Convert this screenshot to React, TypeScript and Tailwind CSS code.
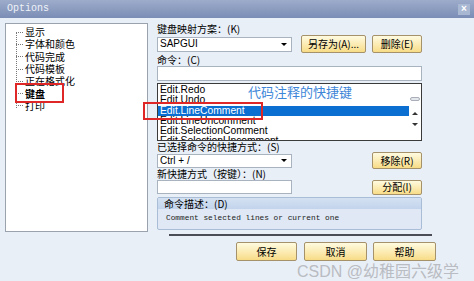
import { ReactNode } from 'react';

const cjk = { fontFamily: '"Noto Sans CJK SC", "Liberation Sans", sans-serif' };
const latin = { fontFamily: '"Liberation Sans", "Noto Sans CJK SC", sans-serif' };
const mono = { fontFamily: '"Liberation Mono", "DejaVu Sans Mono", monospace' };

function YellowButton({ children, className = '' }: { children: ReactNode; className?: string }) {
  return (
    <div
      className={`flex items-center justify-center rounded-[2px] border border-[#a6926a] bg-gradient-to-b from-[#fffbe0] to-[#f8dc86] text-[10px] text-black leading-none ${className}`}
      style={cjk}
    >
      {children}
    </div>
  );
}

function Combo({ value, className = '' }: { value: string; className?: string }) {
  return (
    <div className={`flex items-center justify-between border border-[#a9b2bf] bg-white pl-[2px] pr-[4px] ${className}`}>
      <span className="text-[10px] leading-none text-black" style={latin}>{value}</span>
      <span className="h-0 w-0 border-x-[3px] border-t-[3px] border-x-transparent border-t-black" />
    </div>
  );
}

const treeItems = ['显示', '字体和颜色', '代码完成', '代码模板', '正在格式化', '键盘', '打印'];
const commands = [
  'Edit.Redo',
  'Edit.Undo',
  'Edit.LineComment',
  'Edit.LineUncomment',
  'Edit.SelectionComment',
  'Edit.SelectionUncomment',
];

export default function App() {
  return (
    <div className="relative h-[281px] w-[474px] overflow-hidden bg-[#e9eff7]" style={cjk}>
      {/* title bar */}
      <div className="flex h-[18px] items-center justify-between bg-gradient-to-b from-[#9eaccb] to-[#7a8db5] pl-[7px] pr-[4px]">
        <span className="text-[10px] leading-none text-[#eef2f8]" style={mono}>Options</span>
        <div className="flex h-[11px] w-[12px] items-center justify-center bg-[#a8b7d2] text-[10px] leading-none font-bold text-white" style={latin}>
          ×
        </div>
      </div>

      <div className="flex pl-[5px] pt-[5px]">
        {/* tree */}
        <div className="relative h-[209px] w-[143px] border border-[#9aa3ad] bg-white pt-[2px]">
          <div className="absolute left-[10px] top-[8px] h-[76px] w-0 border-l border-dotted border-[#777]" />
          {treeItems.map((t) => (
            <div key={t} className="flex h-[12.3px] items-center">
              <span className="ml-[10px] mr-[2px] w-[7px] border-t border-dotted border-[#777]" />
              <span className={`text-[10px] leading-none text-black ${t === '键盘' ? 'font-bold' : ''}`}>{t}</span>
            </div>
          ))}
          <div className="absolute left-[9px] top-[59px] h-[20px] w-[49px] border-2 border-[#e02727]" />
        </div>

        {/* right side */}
        <div className="ml-[9px] flex w-[279px] flex-col">
          <div className="flex h-[12px] items-center text-[10px] leading-none text-black">键盘映射方案：(K)</div>
          <div className="flex h-[18px] items-center">
            <Combo value="SAPGUI" className="h-[15px] w-[135px]" />
            <YellowButton className="ml-[9px] h-[18px] w-[65px]">另存为(A)...</YellowButton>
            <YellowButton className="ml-[6px] h-[18px] w-[50px]">删除(E)</YellowButton>
          </div>
          <div className="flex h-[13px] items-center text-[10px] leading-none text-black">命令：(C)</div>
          <div className="h-[15px] w-[265px] border border-[#a9b2bf] bg-white" />

          {/* command list */}
          <div className="mt-[2px] flex h-[58px] w-[265px] overflow-hidden border border-[#3a3a3a] bg-white">
            <div className="flex-1 pt-[1px]">
              {commands.map((c) => (
                <div
                  key={c}
                  className={`flex h-[10.3px] items-center pl-[2px] text-[10.3px] leading-none ${
                    c === 'Edit.LineComment' ? 'bg-[#0b6fd2] text-white' : 'text-black'
                  }`}
                  style={latin}
                >
                  {c}
                </div>
              ))}
            </div>
            <div className="flex w-[12px] flex-col items-center pt-[13px]">
              <div className="h-[4px] w-[10px] rounded-[2px] border border-[#a9aeb8] bg-[#e4e7ec]" />
              <span className="mt-[11px] h-0 w-0 border-x-[3px] border-b-[3px] border-x-transparent border-b-[#333]" />
              <span className="mt-[8px] h-0 w-0 border-x-[3px] border-t-[3px] border-x-transparent border-t-[#333]" />
            </div>
          </div>

          <div className="flex h-[11px] items-end text-[10px] leading-none text-black">已选择命令的快捷方式：(S)</div>
          <div className="flex h-[17px] items-center">
            <Combo value="Ctrl + /" className="h-[14px] w-[135px]" />
            <YellowButton className="ml-[80px] h-[17px] w-[50px]">移除(R)</YellowButton>
          </div>
          <div className="flex h-[10px] items-center text-[10px] leading-none text-black">新快捷方式（按键）：(N)</div>
          <div className="flex h-[16px] items-center">
            <div className="h-[14px] w-[135px] border border-[#a9b2bf] bg-white" />
            <YellowButton className="ml-[80px] h-[15px] w-[50px]">分配(I)</YellowButton>
          </div>

          {/* description group */}
          <div className="mt-[2px] h-[33px] w-[265px] overflow-hidden rounded-[2px] border border-[#a9bdd6] bg-[#dfe8f4]">
            <div className="flex h-[11px] items-center bg-gradient-to-b from-[#d4e1f2] to-[#c2d4ec] pl-[6px] text-[10px] leading-none text-black">
              命令描述：(D)
            </div>
            <div className="flex h-[20px] items-center pl-[8px] text-[7.8px] leading-none text-[#222]" style={mono}>
              Comment selected lines or current one
            </div>
          </div>

          <div className="ml-[12px] mt-[4px] h-[2px] w-[263px] bg-[#4a4d55]" />

          <div className="mt-[6px] flex items-center justify-end">
            <YellowButton className="h-[19px] w-[61px]">保存</YellowButton>
            <YellowButton className="ml-[7px] h-[19px] w-[63px]">取消</YellowButton>
            <YellowButton className="ml-[6px] h-[19px] w-[63px]">帮助</YellowButton>
          </div>
        </div>
      </div>

      {/* annotations */}
      <div className="absolute left-[248px] top-[85px] text-[13px] leading-none text-[#3d86d8]">代码注释的快捷键</div>
      <div className="absolute left-[143px] top-[102px] h-[18px] w-[120px] border-2 border-[#e02727]" />

      {/* watermark */}
      <div className="absolute left-[297px] top-[262px] text-[16px] leading-none text-[#b9bcc2]" style={latin}>
        CSDN @<span style={cjk}>幼稚园六级学渣</span>
      </div>
    </div>
  );
}
